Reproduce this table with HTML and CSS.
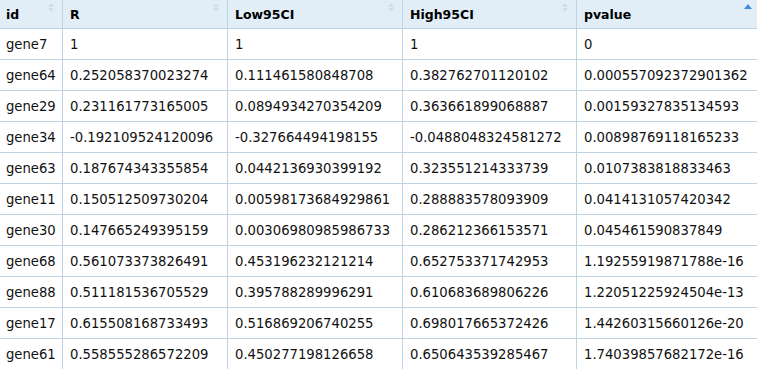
FILE: index.html
```html
<!DOCTYPE html>
<html lang="en">
<head>
    <meta charset="UTF-8">
    <title>Data viewer</title>
    <link rel="stylesheet" href="styles.css">
</head>
<body>
    <table class="grid">
        <colgroup>
            <col class="c-id">
            <col class="c-r">
            <col class="c-low">
            <col class="c-high">
            <col class="c-p">
        </colgroup>
        <thead>
            <tr>
                <th><span class="label">id</span><span class="sort"></span></th>
                <th><span class="label">R</span><span class="sort"></span></th>
                <th><span class="label">Low95CI</span><span class="sort"></span></th>
                <th><span class="label">High95CI</span><span class="sort"></span></th>
                <th><span class="label">pvalue</span><span class="sort asc"></span></th>
            </tr>
        </thead>
        <tbody>
            <tr><td>gene7</td><td>1</td><td>1</td><td>1</td><td>0</td></tr>
            <tr><td>gene64</td><td>0.252058370023274</td><td>0.111461580848708</td><td>0.382762701120102</td><td>0.000557092372901362</td></tr>
            <tr><td>gene29</td><td>0.231161773165005</td><td>0.0894934270354209</td><td>0.363661899068887</td><td>0.00159327835134593</td></tr>
            <tr><td>gene34</td><td>-0.192109524120096</td><td>-0.327664494198155</td><td>-0.0488048324581272</td><td>0.00898769118165233</td></tr>
            <tr><td>gene63</td><td>0.187674343355854</td><td>0.0442136930399192</td><td>0.323551214333739</td><td>0.0107383818833463</td></tr>
            <tr><td>gene11</td><td>0.150512509730204</td><td>0.00598173684929861</td><td>0.288883578093909</td><td>0.0414131057420342</td></tr>
            <tr><td>gene30</td><td>0.147665249395159</td><td>0.00306980985986733</td><td>0.286212366153571</td><td>0.045461590837849</td></tr>
            <tr><td>gene68</td><td>0.561073373826491</td><td>0.453196232121214</td><td>0.652753371742953</td><td>1.19255919871788e-16</td></tr>
            <tr><td>gene88</td><td>0.511181536705529</td><td>0.395788289996291</td><td>0.610683689806226</td><td>1.22051225924504e-13</td></tr>
            <tr><td>gene17</td><td>0.615508168733493</td><td>0.516869206740255</td><td>0.698017665372426</td><td>1.44260315660126e-20</td></tr>
            <tr><td>gene61</td><td>0.558555286572209</td><td>0.450277198126658</td><td>0.650643539285467</td><td>1.74039857682172e-16</td></tr>
        </tbody>
    </table>
</body>
</html>
```

FILE: styles.css
```css
*{
    margin: 0;
    padding: 0;
    box-sizing: border-box;
}

body{
    background: white;
    font-family: "DejaVu Sans", Verdana, sans-serif;
    color: #111;
    overflow: hidden;
}

.grid{
    width: 757px;
    table-layout: fixed;
    border-collapse: separate;
    border-spacing: 0;
    font-size: 13.2px;
}

.c-id{ width: 63px; }
.c-r{ width: 165px; }
.c-low{ width: 175px; }
.c-high{ width: 174px; }
.c-p{ width: 180px; }

.grid th{
    position: relative;
    height: 29px;
    padding: 0 7px;
    text-align: left;
    font-weight: bold;
    font-size: 12.5px;
    color: #000;
    background-color: #e2eef7;
    border-right: 1px solid #bcd4e6;
    border-bottom: 1px solid #bcd4e6;
}

.grid td{
    height: 31px;
    padding: 0 7px;
    white-space: nowrap;
    overflow: hidden;
    border-right: 1px solid #bcd4e6;
    border-bottom: 1px solid #bcd4e6;
}

.grid th:first-child,
.grid td:first-child{
    padding-left: 6px;
}

.grid th:last-child,
.grid td:last-child{
    border-right: none;
}

/* sort arrows in the header corner */
.sort{
    position: absolute;
    top: 3px;
    right: 7px;
    width: 7px;
    height: 9px;
}

.sort::before,
.sort::after{
    content: "";
    position: absolute;
    left: 0;
    border-left: 3.5px solid transparent;
    border-right: 3.5px solid transparent;
}

.sort::before{
    top: 0;
    border-bottom: 4px solid #d3dce3;
}

.sort::after{
    top: 5px;
    border-top: 4px solid #d3dce3;
}

.sort.asc{
    top: 4px;
    right: 6px;
}

.sort.asc::before{
    border-bottom: 5px solid #3c8fdd;
    border-left-width: 4px;
    border-right-width: 4px;
}

.sort.asc::after{
    display: none;
}
```
